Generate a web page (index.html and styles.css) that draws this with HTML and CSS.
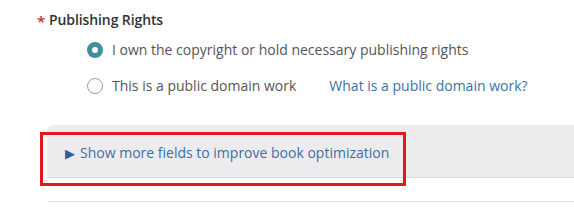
FILE: index.html
```html
<!DOCTYPE html>
<html>
<head>
<meta charset="utf-8">
<link rel="stylesheet" href="styles.css">
</head>
<body>
<div class="page">
  <div class="field-label"><span class="req">*</span>Publishing Rights</div>
  <div class="options">
    <label class="option"><span class="radio checked"></span><span class="opt-text">I own the copyright or hold necessary publishing rights</span></label>
    <label class="option"><span class="radio"></span><span class="opt-text">This is a public domain work</span><a class="link">What is a public domain work?</a></label>
  </div>
  <div class="more-wrap">
    <div class="more-panel">
      <span class="tri">&#9654;</span><span class="more-text">Show more fields to improve book optimization</span>
    </div>
    <div class="highlight"></div>
  </div>
  <div class="rule"></div>
</div>
</body>
</html>
```
FILE: styles.css
```css
html, body {
  margin: 0;
  padding: 0;
  background: #ffffff;
}
body {
  font-family: "Open Sans", "Liberation Sans", sans-serif;
  width: 574px;
  height: 213px;
  overflow: hidden;
}
.page {
  position: relative;
  padding-top: 10px;
}
.field-label {
  padding-left: 37px;
  font-size: 14px;
  font-weight: 600;
  color: #333333;
  line-height: 19px;
  display: flex;
  align-items: center;
  letter-spacing: -0.1px;
}
.req {
  color: #c9302c;
  font-size: 15px;
  width: 12px;
  display: inline-block;
  position: relative;
  top: 2px;
}
.options {
  margin-left: 87px;
  margin-top: 11px;
  display: flex;
  flex-direction: column;
  gap: 17px;
}
.option {
  display: flex;
  align-items: center;
  font-size: 14px;
  color: #555555;
  line-height: 19px;
}
.radio {
  box-sizing: border-box;
  width: 16px;
  height: 16px;
  border-radius: 50%;
  border: 1px solid #9a9a9a;
  background: #fff;
  margin-right: 9px;
  flex: none;
}
.radio.checked {
  border: 5px solid #3f8f9c;
}
.link {
  color: #3d6fa4;
  margin-left: 33px;
}
.more-wrap {
  position: relative;
  margin-top: 30px;
  margin-left: 47px;
}
.more-panel {
  background: #ececee;
  border-bottom: 1px solid #dcdcde;
  border-top-left-radius: 6px;
  display: flex;
  align-items: center;
  padding-left: 18px;
  padding-top: 3px;
  box-sizing: border-box;
  height: 53px;
  font-size: 14px;
  color: #3d6fa4;
}
.tri {
  font-size: 13px;
  margin-right: 5px;
  color: #2f5f96;
}
.highlight {
  position: absolute;
  left: -7px;
  top: 7px;
  width: 366px;
  height: 54px;
  box-sizing: border-box;
  border: 3px solid #e3161b;
}
.rule {
  margin-left: 48px;
  margin-top: 23px;
  height: 1px;
  background: #e4e4e4;
}
```
